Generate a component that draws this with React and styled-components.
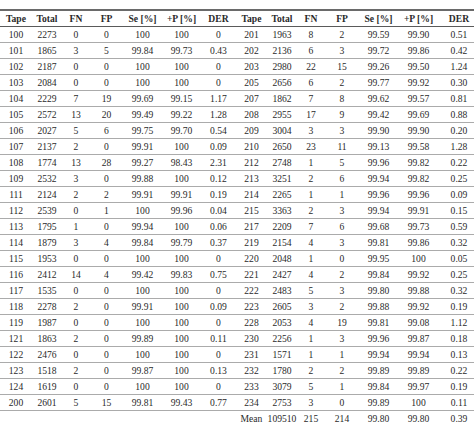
import React from "react";
import styled, { createGlobalStyle } from "styled-components";

const Global = createGlobalStyle`
  html, body { margin: 0; padding: 0; background: #ffffff; }
  body { width: 474px; height: 428px; overflow: hidden; }
`;

const Page = styled.div`
  width: 474px;
  height: 428px;
  overflow: hidden;
  font-family: "Liberation Serif", "DejaVu Serif", serif;
  color: #2a2a2a;
`;

const Caption = styled.div`
  margin-top: -11px;
  height: 20px;
  line-height: 10px;
  font-size: 9.6px;
  text-align: left;
  white-space: nowrap;
  color: #333;
`;

const Table = styled.table`
  width: 479px;
  border-collapse: collapse;
  table-layout: fixed;
  border-top: 2px solid #6a6a6a;
  font-size: 9.6px;
`;

const HeadRow = styled.tr`
  height: 15px;
  border-bottom: 1px solid #5a5a5a;
`;

const Row = styled.tr`
  height: 15px;
  border-bottom: 1px solid ${(p) => (p.$last ? "transparent" : "#ababab")};
`;

const HeadCell = styled.th`
  padding: 0;
  font-weight: bold;
  text-align: center;
  white-space: nowrap;
  line-height: 15px;
`;

const Cell = styled.td`
  padding: 0;
  text-align: center;
  white-space: nowrap;
  line-height: 15px;
`;

const widths = [32, 30, 28, 33, 39, 39, 35, 31, 30, 28, 34, 39, 41, 40];
const heads = ["Tape", "Total", "FN", "FP", "Se [%]", "+P [%]", "DER"];

const left = [
  ["100", "2273", "0", "0", "100", "100", "0"],
  ["101", "1865", "3", "5", "99.84", "99.73", "0.43"],
  ["102", "2187", "0", "0", "100", "100", "0"],
  ["103", "2084", "0", "0", "100", "100", "0"],
  ["104", "2229", "7", "19", "99.69", "99.15", "1.17"],
  ["105", "2572", "13", "20", "99.49", "99.22", "1.28"],
  ["106", "2027", "5", "6", "99.75", "99.70", "0.54"],
  ["107", "2137", "2", "0", "99.91", "100", "0.09"],
  ["108", "1774", "13", "28", "99.27", "98.43", "2.31"],
  ["109", "2532", "3", "0", "99.88", "100", "0.12"],
  ["111", "2124", "2", "2", "99.91", "99.91", "0.19"],
  ["112", "2539", "0", "1", "100", "99.96", "0.04"],
  ["113", "1795", "1", "0", "99.94", "100", "0.06"],
  ["114", "1879", "3", "4", "99.84", "99.79", "0.37"],
  ["115", "1953", "0", "0", "100", "100", "0"],
  ["116", "2412", "14", "4", "99.42", "99.83", "0.75"],
  ["117", "1535", "0", "0", "100", "100", "0"],
  ["118", "2278", "2", "0", "99.91", "100", "0.09"],
  ["119", "1987", "0", "0", "100", "100", "0"],
  ["121", "1863", "2", "0", "99.89", "100", "0.11"],
  ["122", "2476", "0", "0", "100", "100", "0"],
  ["123", "1518", "2", "0", "99.87", "100", "0.13"],
  ["124", "1619", "0", "0", "100", "100", "0"],
  ["200", "2601", "5", "15", "99.81", "99.43", "0.77"],
  ["", "", "", "", "", "", ""],
];

const right = [
  ["201", "1963", "8", "2", "99.59", "99.90", "0.51"],
  ["202", "2136", "6", "3", "99.72", "99.86", "0.42"],
  ["203", "2980", "22", "15", "99.26", "99.50", "1.24"],
  ["205", "2656", "6", "2", "99.77", "99.92", "0.30"],
  ["207", "1862", "7", "8", "99.62", "99.57", "0.81"],
  ["208", "2955", "17", "9", "99.42", "99.69", "0.88"],
  ["209", "3004", "3", "3", "99.90", "99.90", "0.20"],
  ["210", "2650", "23", "11", "99.13", "99.58", "1.28"],
  ["212", "2748", "1", "5", "99.96", "99.82", "0.22"],
  ["213", "3251", "2", "6", "99.94", "99.82", "0.25"],
  ["214", "2265", "1", "1", "99.96", "99.96", "0.09"],
  ["215", "3363", "2", "3", "99.94", "99.91", "0.15"],
  ["217", "2209", "7", "6", "99.68", "99.73", "0.59"],
  ["219", "2154", "4", "3", "99.81", "99.86", "0.32"],
  ["220", "2048", "1", "0", "99.95", "100", "0.05"],
  ["221", "2427", "4", "2", "99.84", "99.92", "0.25"],
  ["222", "2483", "5", "3", "99.80", "99.88", "0.32"],
  ["223", "2605", "3", "2", "99.88", "99.92", "0.19"],
  ["228", "2053", "4", "19", "99.81", "99.08", "1.12"],
  ["230", "2256", "1", "3", "99.96", "99.87", "0.18"],
  ["231", "1571", "1", "1", "99.94", "99.94", "0.13"],
  ["232", "1780", "2", "2", "99.89", "99.89", "0.22"],
  ["233", "3079", "5", "1", "99.84", "99.97", "0.19"],
  ["234", "2753", "3", "0", "99.89", "100", "0.11"],
  ["Mean", "109510", "215", "214", "99.80", "99.80", "0.39"],
];

export default function App() {
  return (
    <Page>
      <Global />
      <Caption>
        Table 3. Detection results of the method [%] on all records of MIT-BIH and the algorithm.
      </Caption>
      <Table>
        <colgroup>
          {widths.map((w, i) => (
            <col key={i} style={{ width: w }} />
          ))}
        </colgroup>
        <thead>
          <HeadRow>
            {[...heads, ...heads].map((h, i) => (
              <HeadCell key={i}>{h}</HeadCell>
            ))}
          </HeadRow>
        </thead>
        <tbody>
          {left.map((l, i) => (
            <Row key={i} $last={i === left.length - 1}>
              {[...l, ...right[i]].map((c, j) => (
                <Cell key={j}>{c}</Cell>
              ))}
            </Row>
          ))}
        </tbody>
      </Table>
    </Page>
  );
}
